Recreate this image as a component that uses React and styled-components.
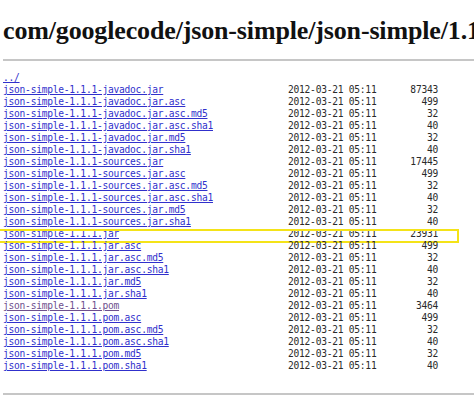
import React from "react";
import styled, { createGlobalStyle } from "styled-components";

const Global = createGlobalStyle`
  html, body { margin: 0; padding: 0; background: #ffffff; }
  body { overflow: hidden; }
`;

const Page = styled.main`
  width: 474px;
  height: 403px;
  padding: 0 0 0 3px;
  box-sizing: border-box;
  overflow: hidden;
  display: flex;
  flex-direction: column;
`;

const Title = styled.h1`
  margin: 16px 0 0 0;
  font-family: "Liberation Serif", "Times New Roman", serif;
  font-weight: bold;
  font-size: 26px;
  line-height: 30px;
  color: #111;
  white-space: nowrap;
  letter-spacing: -0.15px;
`;

const Rule = styled.div`
  height: 2px;
  background: #c6c6c6;
  margin: ${(p) => p.$top}px 0 0 0;
  width: 480px;
`;

const Listing = styled.div`
  margin-top: 11px;
  display: flex;
  flex-direction: column;
  font-family: "DejaVu Sans Mono", "Liberation Mono", monospace;
  font-size: 9.6px;
  letter-spacing: -0.25px;
  line-height: 12px;
  color: #2a2a2a;
`;

const Row = styled.div`
  position: relative;
  display: grid;
  grid-template-columns: 285px 92px 58px;
  height: 12px;
  white-space: nowrap;

  ${(p) =>
    p.$highlight &&
    `
    &::after {
      content: "";
      position: absolute;
      left: -6px;
      top: 1px;
      width: 462px;
      height: 14px;
      box-sizing: border-box;
      border: 2px solid #f4e318;
      pointer-events: none;
    }
  `}
`;

const Name = styled.a`
  color: ${(p) => (p.$visited ? "#6e4f8e" : "#3030cc")};
  text-decoration: underline;
`;

const DateCell = styled.span``;

const Size = styled.span`
  text-align: right;
`;

const D = "2012-03-21 05:11";
const P = "json-simple-1.1.1";

const files = [
  [`${P}-javadoc.jar`, "87343"],
  [`${P}-javadoc.jar.asc`, "499"],
  [`${P}-javadoc.jar.asc.md5`, "32"],
  [`${P}-javadoc.jar.asc.sha1`, "40"],
  [`${P}-javadoc.jar.md5`, "32"],
  [`${P}-javadoc.jar.sha1`, "40"],
  [`${P}-sources.jar`, "17445"],
  [`${P}-sources.jar.asc`, "499"],
  [`${P}-sources.jar.asc.md5`, "32"],
  [`${P}-sources.jar.asc.sha1`, "40"],
  [`${P}-sources.jar.md5`, "32"],
  [`${P}-sources.jar.sha1`, "40"],
  [`${P}.jar`, "23931", true],
  [`${P}.jar.asc`, "499"],
  [`${P}.jar.asc.md5`, "32"],
  [`${P}.jar.asc.sha1`, "40"],
  [`${P}.jar.md5`, "32"],
  [`${P}.jar.sha1`, "40"],
  [`${P}.pom`, "3464", false, true],
  [`${P}.pom.asc`, "499"],
  [`${P}.pom.asc.md5`, "32"],
  [`${P}.pom.asc.sha1`, "40"],
  [`${P}.pom.md5`, "32"],
  [`${P}.pom.sha1`, "40"],
];

export default function App() {
  return (
    <>
      <Global />
      <Page>
        <Title>com/googlecode/json-simple/json-simple/1.1.1/</Title>
        <Rule $top={13} />
        <Listing>
          <Row>
            <Name href="#">../</Name>
          </Row>
          {files.map(([name, size, hl, visited]) => (
            <Row key={name} $highlight={hl}>
              <Name href="#" $visited={visited}>
                {name}
              </Name>
              <DateCell>{D}</DateCell>
              <Size>{size}</Size>
            </Row>
          ))}
        </Listing>
        <Rule $top={21} />
      </Page>
    </>
  );
}
